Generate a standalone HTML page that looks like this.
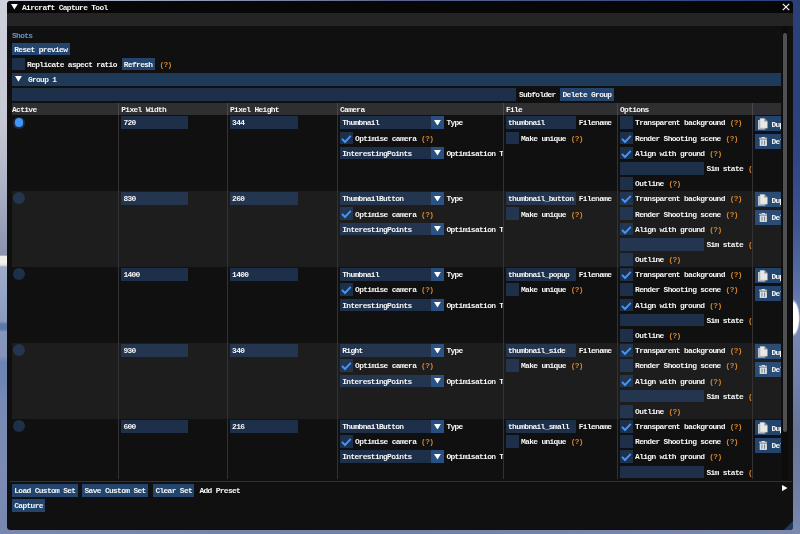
<!DOCTYPE html>
<html><head><meta charset="utf-8"><title>Aircraft Capture Tool</title><style>
html,body{margin:0;padding:0;background:#101010;}
body{width:800px;height:534px;position:relative;overflow:hidden;font-family:"Liberation Mono",monospace;font-size:7.9px;letter-spacing:-0.660px;color:#f6f6f6;}
#w{position:absolute;left:0;top:0;width:800px;height:534px;will-change:transform;}
.r{position:absolute;}
.clip{position:absolute;overflow:hidden;}
.t{position:absolute;white-space:pre;display:block;padding-top:0.5px;box-sizing:border-box;font-weight:bold;}
</style></head><body>
<div id="w">
<div class="r" style="left:0;top:0;width:800px;height:534px;background:linear-gradient(90deg,#cdd0da 0px,#c5c9d6 20px,#5a6590 400px,#2c4180 780px)"></div>
<div class="r" style="left:0;top:0;width:10px;height:534px;background:linear-gradient(180deg,#cfd2dc 0px,#c6c9d4 120px,#b0b5c8 180px,#969db6 232px,#8b92ac 255px,#efede9 256.5px,#f3f1ee 262px,#e4e3e4 265px,#9dabc9 267px,#97a6c6 290px,#8a9bc0 321px,#5d76aa 324.5px,#5d76aa 329px,#8797bd 332px,#8494bb 356px,#6e85b4 362px,#6f86b4 384px,#788ab4 400px,#7b8bb3 470px,#7786ae 534px)"></div>
<div class="r" style="left:790px;top:0;width:10px;height:534px;background:linear-gradient(180deg,#2b4079 0px,#2c427c 134px,#34498a 180px,#415690 230px,#526aa2 270px,#6177ad 296px,#7d8cb8 318px,#7586b2 340px,#7080a8 380px,#66749c 430px,#6e7ca4 480px,#7a88b0 534px)"></div>
<div class="r" style="left:785.8px;top:298.5px;width:14.4px;height:38px;border-radius:50%;background:radial-gradient(closest-side,#fff 0%,#fff 78%,rgba(205,212,230,0.6) 90%,rgba(150,162,200,0) 100%)"></div>
<div class="r" style="left:0;top:526px;width:800px;height:8px;background:linear-gradient(90deg,#7787b0,#7080a8 50%,#7a88b0)"></div>
<div class="r" style="left:7.40px;top:1.00px;width:785.70px;height:528.60px;background:#101010;border-radius:3.5px;"></div>
<div class="r" style="left:7.40px;top:1.00px;width:785.70px;height:12.00px;background:#070707;border-radius:3.5px 3.5px 0 0;"></div>
<div class="r" style="left:7.40px;top:12.60px;width:785.70px;height:13.50px;background:#242424;"></div>
<svg class="r" style="left:11.20px;top:4.10px" width="6.8" height="5.5" viewBox="0 0 6.8 5.5"><path d="M0 0 L6.8 0 L3.4 5.5 Z" fill="#fff"/></svg>
<span class="t" style="left:22.00px;top:1.55px;height:12.20px;line-height:12.20px;">Aircraft Capture Tool</span>
<svg class="r" style="left:782px;top:3.4px" width="8" height="8" viewBox="0 0 8 8"><path d="M0.8 0.8 L7.2 7.2 M7.2 0.8 L0.8 7.2" stroke="#fff" stroke-width="1.1" fill="none"/></svg>
<div class="r" style="left:781.80px;top:26.20px;width:6.20px;height:454.00px;background:#0c0c0c;"></div>
<div class="r" style="left:782.50px;top:32.60px;width:4.80px;height:399.30px;background:#505050;border-radius:2.4px;"></div>
<svg class="r" style="left:784.1px;top:520.6px" width="9" height="9" viewBox="0 0 9 9"><path d="M9 0 L9 5.6 Q9 9 5.6 9 L0 9 Z" fill="#213a5c"/></svg>
<span class="t" style="left:12.00px;top:29.55px;height:12.70px;line-height:12.70px;color:#5f97c9;">Shots</span>
<div class="r" style="left:12.10px;top:42.70px;width:57.44px;height:12.70px;background:rgba(66,150,250,0.40);"></div>
<span class="t" style="left:14.30px;top:43.25px;height:12.70px;line-height:12.70px;">Reset preview</span>
<div class="r" style="left:12.10px;top:57.80px;width:12.70px;height:12.70px;background:rgba(41,74,122,0.54);"></div>
<span class="t" style="left:27.10px;top:58.35px;height:12.70px;line-height:12.70px;">Replicate aspect ratio</span>
<div class="r" style="left:121.66px;top:57.80px;width:32.96px;height:12.70px;background:rgba(66,150,250,0.40);"></div>
<span class="t" style="left:123.86px;top:58.35px;height:12.70px;line-height:12.70px;">Refresh</span>
<span class="t" style="left:159.42px;top:58.35px;height:12.70px;line-height:12.70px;color:#d8852a;">(?)</span>
<div class="r" style="left:12.00px;top:72.80px;width:769.00px;height:12.90px;background:#1f3958;"></div>
<svg class="r" style="left:15.20px;top:76.20px" width="6.9" height="5.8" viewBox="0 0 6.9 5.8"><path d="M0 0 L6.9 0 L3.45 5.8 Z" fill="#fff"/></svg>
<span class="t" style="left:27.90px;top:73.35px;height:12.90px;line-height:12.90px;">Group 1</span>
<div class="r" style="left:12.00px;top:87.90px;width:504.20px;height:12.70px;background:rgba(41,74,122,0.54);"></div>
<span class="t" style="left:519.00px;top:88.45px;height:12.70px;line-height:12.70px;">Subfolder</span>
<div class="r" style="left:560.30px;top:87.90px;width:53.36px;height:12.70px;background:rgba(66,150,250,0.40);"></div>
<span class="t" style="left:562.50px;top:88.45px;height:12.70px;line-height:12.70px;">Delete Group</span>
<div class="r" style="left:12.00px;top:191.03px;width:769.00px;height:75.93px;background:#1d1d1d;"></div>
<div class="r" style="left:12.00px;top:342.89px;width:769.00px;height:75.93px;background:#1d1d1d;"></div>
<div class="r" style="left:12.00px;top:103.20px;width:769.00px;height:11.90px;background:#2f2f31;"></div>
<div class="r" style="left:118.10px;top:103.20px;width:1.00px;height:11.90px;background:#47474d;"></div>
<div class="r" style="left:118.15px;top:115.10px;width:0.90px;height:363.90px;background:#323236;"></div>
<div class="r" style="left:226.80px;top:103.20px;width:1.00px;height:11.90px;background:#47474d;"></div>
<div class="r" style="left:226.85px;top:115.10px;width:0.90px;height:363.90px;background:#323236;"></div>
<div class="r" style="left:337.00px;top:103.20px;width:1.00px;height:11.90px;background:#47474d;"></div>
<div class="r" style="left:337.05px;top:115.10px;width:0.90px;height:363.90px;background:#323236;"></div>
<div class="r" style="left:502.60px;top:103.20px;width:1.00px;height:11.90px;background:#47474d;"></div>
<div class="r" style="left:502.65px;top:115.10px;width:0.90px;height:363.90px;background:#323236;"></div>
<div class="r" style="left:617.10px;top:103.20px;width:1.00px;height:11.90px;background:#47474d;"></div>
<div class="r" style="left:617.15px;top:115.10px;width:0.90px;height:363.90px;background:#323236;"></div>
<div class="r" style="left:752.30px;top:103.20px;width:1.00px;height:11.90px;background:#47474d;"></div>
<div class="r" style="left:752.35px;top:115.10px;width:0.90px;height:363.90px;background:#323236;"></div>
<span class="t" style="left:12.00px;top:103.60px;height:11.90px;line-height:11.90px;">Active</span>
<span class="t" style="left:121.30px;top:103.60px;height:11.90px;line-height:11.90px;">Pixel Width</span>
<span class="t" style="left:230.00px;top:103.60px;height:11.90px;line-height:11.90px;">Pixel Height</span>
<span class="t" style="left:340.00px;top:103.60px;height:11.90px;line-height:11.90px;">Camera</span>
<span class="t" style="left:505.90px;top:103.60px;height:11.90px;line-height:11.90px;">File</span>
<span class="t" style="left:620.00px;top:103.60px;height:11.90px;line-height:11.90px;">Options</span>
<div class="clip" style="left:12.0px;top:115.1px;width:769.0px;height:364.50px"><div class="r" style="left:-12.0px;top:-115.1px">
<div class="r" style="left:12.9px;top:116.55px;width:12.0px;height:12.0px;border-radius:50%;background:rgba(41,74,122,0.54)"></div>
<div class="r" style="left:14.5px;top:118.15px;width:8.8px;height:8.8px;border-radius:50%;background:#4296fa"></div>
<div class="r" style="left:121.30px;top:116.35px;width:66.90px;height:12.70px;background:rgba(41,74,122,0.54);"></div>
<span class="t" style="left:123.40px;top:116.90px;height:12.70px;line-height:12.70px;">720</span>
<div class="r" style="left:230.00px;top:116.35px;width:68.00px;height:12.70px;background:rgba(41,74,122,0.54);"></div>
<span class="t" style="left:232.10px;top:116.90px;height:12.70px;line-height:12.70px;">344</span>
<div class="clip" style="left:338.00px;top:115.10px;width:164.70px;height:75.93px"><div class="r" style="left:-338.00px;top:-115.10px">
<div class="r" style="left:340.00px;top:116.35px;width:104.00px;height:12.70px;background:rgba(41,74,122,0.54);"></div>
<div class="r" style="left:431.30px;top:116.35px;width:12.70px;height:12.70px;background:rgba(60,135,225,0.36);"></div>
<svg class="r" style="left:434.20px;top:119.85px" width="6.9" height="5.6" viewBox="0 0 6.9 5.6"><path d="M0 0 L6.9 0 L3.45 5.6 Z" fill="#fff"/></svg>
<span class="t" style="left:342.30px;top:116.90px;height:12.70px;line-height:12.70px;">Thumbnail</span>
<span class="t" style="left:446.40px;top:116.90px;height:12.70px;line-height:12.70px;">Type</span>
<div class="r" style="left:340.00px;top:131.53px;width:12.70px;height:12.70px;background:rgba(41,74,122,0.54);"></div>
<svg class="r" style="left:340.00px;top:131.53px" width="12.7" height="12.7" viewBox="0 0 12.7 12.7"><path d="M2.0 6.8 L5.0 10.0 L10.8 3.8" fill="none" stroke="#4296fa" stroke-width="1.9"/></svg>
<span class="t" style="left:355.10px;top:132.08px;height:12.70px;line-height:12.70px;">Optimise camera</span>
<span class="t" style="left:421.10px;top:132.08px;height:12.70px;line-height:12.70px;color:#d8852a;">(?)</span>
<div class="r" style="left:340.00px;top:146.71px;width:104.00px;height:12.70px;background:rgba(41,74,122,0.54);"></div>
<div class="r" style="left:431.30px;top:146.71px;width:12.70px;height:12.70px;background:rgba(60,135,225,0.36);"></div>
<svg class="r" style="left:434.20px;top:150.21px" width="6.9" height="5.6" viewBox="0 0 6.9 5.6"><path d="M0 0 L6.9 0 L3.45 5.6 Z" fill="#fff"/></svg>
<span class="t" style="left:342.30px;top:147.26px;height:12.70px;line-height:12.70px;">InterestingPoints</span>
<span class="t" style="left:446.40px;top:147.26px;height:12.70px;line-height:12.70px;">Optimisation T</span>
</div></div>
<div class="r" style="left:505.90px;top:116.35px;width:70.50px;height:12.70px;background:rgba(41,74,122,0.54);"></div>
<span class="t" style="left:508.00px;top:116.90px;height:12.70px;line-height:12.70px;">thumbnail</span>
<span class="t" style="left:578.80px;top:116.90px;height:12.70px;line-height:12.70px;">Filename</span>
<div class="r" style="left:505.90px;top:131.53px;width:12.70px;height:12.70px;background:rgba(41,74,122,0.54);"></div>
<span class="t" style="left:521.00px;top:132.08px;height:12.70px;line-height:12.70px;">Make unique</span>
<span class="t" style="left:570.68px;top:132.08px;height:12.70px;line-height:12.70px;color:#d8852a;">(?)</span>
<div class="r" style="left:620.00px;top:116.35px;width:12.70px;height:12.70px;background:rgba(41,74,122,0.54);"></div>
<span class="t" style="left:635.10px;top:116.90px;height:12.70px;line-height:12.70px;">Transparent background</span>
<span class="t" style="left:729.66px;top:116.90px;height:12.70px;line-height:12.70px;color:#d8852a;">(?)</span>
<div class="r" style="left:620.00px;top:131.53px;width:12.70px;height:12.70px;background:rgba(41,74,122,0.54);"></div>
<svg class="r" style="left:620.00px;top:131.53px" width="12.7" height="12.7" viewBox="0 0 12.7 12.7"><path d="M2.0 6.8 L5.0 10.0 L10.8 3.8" fill="none" stroke="#4296fa" stroke-width="1.9"/></svg>
<span class="t" style="left:635.10px;top:132.08px;height:12.70px;line-height:12.70px;">Render Shooting scene</span>
<span class="t" style="left:725.58px;top:132.08px;height:12.70px;line-height:12.70px;color:#d8852a;">(?)</span>
<div class="r" style="left:620.00px;top:146.71px;width:12.70px;height:12.70px;background:rgba(41,74,122,0.54);"></div>
<svg class="r" style="left:620.00px;top:146.71px" width="12.7" height="12.7" viewBox="0 0 12.7 12.7"><path d="M2.0 6.8 L5.0 10.0 L10.8 3.8" fill="none" stroke="#4296fa" stroke-width="1.9"/></svg>
<span class="t" style="left:635.10px;top:147.26px;height:12.70px;line-height:12.70px;">Align with ground</span>
<span class="t" style="left:709.26px;top:147.26px;height:12.70px;line-height:12.70px;color:#d8852a;">(?)</span>
<div class="r" style="left:620.00px;top:161.89px;width:84.00px;height:12.70px;background:rgba(41,74,122,0.54);"></div>
<span class="t" style="left:706.40px;top:162.44px;height:12.70px;line-height:12.70px;">Sim state</span>
<span class="t" style="left:747.92px;top:162.44px;height:12.70px;line-height:12.70px;color:#d8852a;">(</span>
<div class="r" style="left:620.00px;top:177.07px;width:12.70px;height:12.70px;background:rgba(41,74,122,0.54);"></div>
<span class="t" style="left:635.10px;top:177.62px;height:12.70px;line-height:12.70px;">Outline</span>
<span class="t" style="left:668.46px;top:177.62px;height:12.70px;line-height:12.70px;color:#d8852a;">(?)</span>
<div class="r" style="left:755.00px;top:116.35px;width:26.20px;height:15.00px;background:rgba(66,150,250,0.40);"></div>
<div class="r" style="left:755.00px;top:133.85px;width:26.20px;height:15.00px;background:rgba(66,150,250,0.40);"></div>
<svg class="r" style="left:758.30px;top:118.05px" width="10" height="12" viewBox="0 0 10 12"><path d="M0 2.0 L0 11.6 L7.4 11.6 L7.4 2.0 Z" fill="#c4c6c8"/><path d="M1.9 0.2 L6.4 0.2 L9.6 3.4 L9.6 10.3 L1.9 10.3 Z" fill="#e8e8e5" stroke="#6d7f99" stroke-width="0.35"/><path d="M6.4 0.2 L6.4 3.4 L9.6 3.4 Z" fill="#7f8ea3"/></svg>
<span class="t" style="left:771.40px;top:116.80px;height:15.00px;line-height:15.00px;">Dup</span>
<svg class="r" style="left:758.80px;top:136.95px" width="8.6" height="9" viewBox="0 0 8.6 9"><path d="M0 0.8 L2.7 0.8 L2.7 0 L5.9 0 L5.9 0.8 L8.6 0.8 L8.6 1.8 L0 1.8 Z" fill="#e4e4e1"/><path d="M0.7 2.4 L7.9 2.4 L7.9 8.9 L0.7 8.9 Z" fill="#e4e4e1"/><path d="M3.0 3.6 L3.0 7.8 M5.6 3.6 L5.6 7.8" stroke="#5a7090" stroke-width="0.9"/></svg>
<span class="t" style="left:771.40px;top:133.75px;height:15.00px;line-height:15.00px;">Del</span>
<div class="r" style="left:12.9px;top:192.48px;width:12.0px;height:12.0px;border-radius:50%;background:rgba(41,74,122,0.54)"></div>
<div class="r" style="left:121.30px;top:192.28px;width:66.90px;height:12.70px;background:rgba(41,74,122,0.54);"></div>
<span class="t" style="left:123.40px;top:192.83px;height:12.70px;line-height:12.70px;">830</span>
<div class="r" style="left:230.00px;top:192.28px;width:68.00px;height:12.70px;background:rgba(41,74,122,0.54);"></div>
<span class="t" style="left:232.10px;top:192.83px;height:12.70px;line-height:12.70px;">260</span>
<div class="clip" style="left:338.00px;top:191.03px;width:164.70px;height:75.93px"><div class="r" style="left:-338.00px;top:-191.03px">
<div class="r" style="left:340.00px;top:192.28px;width:104.00px;height:12.70px;background:rgba(41,74,122,0.54);"></div>
<div class="r" style="left:431.30px;top:192.28px;width:12.70px;height:12.70px;background:rgba(60,135,225,0.36);"></div>
<svg class="r" style="left:434.20px;top:195.78px" width="6.9" height="5.6" viewBox="0 0 6.9 5.6"><path d="M0 0 L6.9 0 L3.45 5.6 Z" fill="#fff"/></svg>
<span class="t" style="left:342.30px;top:192.83px;height:12.70px;line-height:12.70px;">ThumbnailButton</span>
<span class="t" style="left:446.40px;top:192.83px;height:12.70px;line-height:12.70px;">Type</span>
<div class="r" style="left:340.00px;top:207.46px;width:12.70px;height:12.70px;background:rgba(41,74,122,0.54);"></div>
<svg class="r" style="left:340.00px;top:207.46px" width="12.7" height="12.7" viewBox="0 0 12.7 12.7"><path d="M2.0 6.8 L5.0 10.0 L10.8 3.8" fill="none" stroke="#4296fa" stroke-width="1.9"/></svg>
<span class="t" style="left:355.10px;top:208.01px;height:12.70px;line-height:12.70px;">Optimise camera</span>
<span class="t" style="left:421.10px;top:208.01px;height:12.70px;line-height:12.70px;color:#d8852a;">(?)</span>
<div class="r" style="left:340.00px;top:222.64px;width:104.00px;height:12.70px;background:rgba(41,74,122,0.54);"></div>
<div class="r" style="left:431.30px;top:222.64px;width:12.70px;height:12.70px;background:rgba(60,135,225,0.36);"></div>
<svg class="r" style="left:434.20px;top:226.14px" width="6.9" height="5.6" viewBox="0 0 6.9 5.6"><path d="M0 0 L6.9 0 L3.45 5.6 Z" fill="#fff"/></svg>
<span class="t" style="left:342.30px;top:223.19px;height:12.70px;line-height:12.70px;">InterestingPoints</span>
<span class="t" style="left:446.40px;top:223.19px;height:12.70px;line-height:12.70px;">Optimisation T</span>
</div></div>
<div class="r" style="left:505.90px;top:192.28px;width:70.50px;height:12.70px;background:rgba(41,74,122,0.54);"></div>
<span class="t" style="left:508.00px;top:192.83px;height:12.70px;line-height:12.70px;">thumbnail_button</span>
<span class="t" style="left:578.80px;top:192.83px;height:12.70px;line-height:12.70px;">Filename</span>
<div class="r" style="left:505.90px;top:207.46px;width:12.70px;height:12.70px;background:rgba(41,74,122,0.54);"></div>
<span class="t" style="left:521.00px;top:208.01px;height:12.70px;line-height:12.70px;">Make unique</span>
<span class="t" style="left:570.68px;top:208.01px;height:12.70px;line-height:12.70px;color:#d8852a;">(?)</span>
<div class="r" style="left:620.00px;top:192.28px;width:12.70px;height:12.70px;background:rgba(41,74,122,0.54);"></div>
<svg class="r" style="left:620.00px;top:192.28px" width="12.7" height="12.7" viewBox="0 0 12.7 12.7"><path d="M2.0 6.8 L5.0 10.0 L10.8 3.8" fill="none" stroke="#4296fa" stroke-width="1.9"/></svg>
<span class="t" style="left:635.10px;top:192.83px;height:12.70px;line-height:12.70px;">Transparent background</span>
<span class="t" style="left:729.66px;top:192.83px;height:12.70px;line-height:12.70px;color:#d8852a;">(?)</span>
<div class="r" style="left:620.00px;top:207.46px;width:12.70px;height:12.70px;background:rgba(41,74,122,0.54);"></div>
<span class="t" style="left:635.10px;top:208.01px;height:12.70px;line-height:12.70px;">Render Shooting scene</span>
<span class="t" style="left:725.58px;top:208.01px;height:12.70px;line-height:12.70px;color:#d8852a;">(?)</span>
<div class="r" style="left:620.00px;top:222.64px;width:12.70px;height:12.70px;background:rgba(41,74,122,0.54);"></div>
<svg class="r" style="left:620.00px;top:222.64px" width="12.7" height="12.7" viewBox="0 0 12.7 12.7"><path d="M2.0 6.8 L5.0 10.0 L10.8 3.8" fill="none" stroke="#4296fa" stroke-width="1.9"/></svg>
<span class="t" style="left:635.10px;top:223.19px;height:12.70px;line-height:12.70px;">Align with ground</span>
<span class="t" style="left:709.26px;top:223.19px;height:12.70px;line-height:12.70px;color:#d8852a;">(?)</span>
<div class="r" style="left:620.00px;top:237.82px;width:84.00px;height:12.70px;background:rgba(41,74,122,0.54);"></div>
<span class="t" style="left:706.40px;top:238.37px;height:12.70px;line-height:12.70px;">Sim state</span>
<span class="t" style="left:747.92px;top:238.37px;height:12.70px;line-height:12.70px;color:#d8852a;">(</span>
<div class="r" style="left:620.00px;top:253.00px;width:12.70px;height:12.70px;background:rgba(41,74,122,0.54);"></div>
<span class="t" style="left:635.10px;top:253.55px;height:12.70px;line-height:12.70px;">Outline</span>
<span class="t" style="left:668.46px;top:253.55px;height:12.70px;line-height:12.70px;color:#d8852a;">(?)</span>
<div class="r" style="left:755.00px;top:192.28px;width:26.20px;height:15.00px;background:rgba(66,150,250,0.40);"></div>
<div class="r" style="left:755.00px;top:209.78px;width:26.20px;height:15.00px;background:rgba(66,150,250,0.40);"></div>
<svg class="r" style="left:758.30px;top:193.98px" width="10" height="12" viewBox="0 0 10 12"><path d="M0 2.0 L0 11.6 L7.4 11.6 L7.4 2.0 Z" fill="#c4c6c8"/><path d="M1.9 0.2 L6.4 0.2 L9.6 3.4 L9.6 10.3 L1.9 10.3 Z" fill="#e8e8e5" stroke="#6d7f99" stroke-width="0.35"/><path d="M6.4 0.2 L6.4 3.4 L9.6 3.4 Z" fill="#7f8ea3"/></svg>
<span class="t" style="left:771.40px;top:192.73px;height:15.00px;line-height:15.00px;">Dup</span>
<svg class="r" style="left:758.80px;top:212.88px" width="8.6" height="9" viewBox="0 0 8.6 9"><path d="M0 0.8 L2.7 0.8 L2.7 0 L5.9 0 L5.9 0.8 L8.6 0.8 L8.6 1.8 L0 1.8 Z" fill="#e4e4e1"/><path d="M0.7 2.4 L7.9 2.4 L7.9 8.9 L0.7 8.9 Z" fill="#e4e4e1"/><path d="M3.0 3.6 L3.0 7.8 M5.6 3.6 L5.6 7.8" stroke="#5a7090" stroke-width="0.9"/></svg>
<span class="t" style="left:771.40px;top:209.68px;height:15.00px;line-height:15.00px;">Del</span>
<div class="r" style="left:12.9px;top:268.41px;width:12.0px;height:12.0px;border-radius:50%;background:rgba(41,74,122,0.54)"></div>
<div class="r" style="left:121.30px;top:268.21px;width:66.90px;height:12.70px;background:rgba(41,74,122,0.54);"></div>
<span class="t" style="left:123.40px;top:268.76px;height:12.70px;line-height:12.70px;">1400</span>
<div class="r" style="left:230.00px;top:268.21px;width:68.00px;height:12.70px;background:rgba(41,74,122,0.54);"></div>
<span class="t" style="left:232.10px;top:268.76px;height:12.70px;line-height:12.70px;">1400</span>
<div class="clip" style="left:338.00px;top:266.96px;width:164.70px;height:75.93px"><div class="r" style="left:-338.00px;top:-266.96px">
<div class="r" style="left:340.00px;top:268.21px;width:104.00px;height:12.70px;background:rgba(41,74,122,0.54);"></div>
<div class="r" style="left:431.30px;top:268.21px;width:12.70px;height:12.70px;background:rgba(60,135,225,0.36);"></div>
<svg class="r" style="left:434.20px;top:271.71px" width="6.9" height="5.6" viewBox="0 0 6.9 5.6"><path d="M0 0 L6.9 0 L3.45 5.6 Z" fill="#fff"/></svg>
<span class="t" style="left:342.30px;top:268.76px;height:12.70px;line-height:12.70px;">Thumbnail</span>
<span class="t" style="left:446.40px;top:268.76px;height:12.70px;line-height:12.70px;">Type</span>
<div class="r" style="left:340.00px;top:283.39px;width:12.70px;height:12.70px;background:rgba(41,74,122,0.54);"></div>
<svg class="r" style="left:340.00px;top:283.39px" width="12.7" height="12.7" viewBox="0 0 12.7 12.7"><path d="M2.0 6.8 L5.0 10.0 L10.8 3.8" fill="none" stroke="#4296fa" stroke-width="1.9"/></svg>
<span class="t" style="left:355.10px;top:283.94px;height:12.70px;line-height:12.70px;">Optimise camera</span>
<span class="t" style="left:421.10px;top:283.94px;height:12.70px;line-height:12.70px;color:#d8852a;">(?)</span>
<div class="r" style="left:340.00px;top:298.57px;width:104.00px;height:12.70px;background:rgba(41,74,122,0.54);"></div>
<div class="r" style="left:431.30px;top:298.57px;width:12.70px;height:12.70px;background:rgba(60,135,225,0.36);"></div>
<svg class="r" style="left:434.20px;top:302.07px" width="6.9" height="5.6" viewBox="0 0 6.9 5.6"><path d="M0 0 L6.9 0 L3.45 5.6 Z" fill="#fff"/></svg>
<span class="t" style="left:342.30px;top:299.12px;height:12.70px;line-height:12.70px;">InterestingPoints</span>
<span class="t" style="left:446.40px;top:299.12px;height:12.70px;line-height:12.70px;">Optimisation T</span>
</div></div>
<div class="r" style="left:505.90px;top:268.21px;width:70.50px;height:12.70px;background:rgba(41,74,122,0.54);"></div>
<span class="t" style="left:508.00px;top:268.76px;height:12.70px;line-height:12.70px;">thumbnail_popup</span>
<span class="t" style="left:578.80px;top:268.76px;height:12.70px;line-height:12.70px;">Filename</span>
<div class="r" style="left:505.90px;top:283.39px;width:12.70px;height:12.70px;background:rgba(41,74,122,0.54);"></div>
<span class="t" style="left:521.00px;top:283.94px;height:12.70px;line-height:12.70px;">Make unique</span>
<span class="t" style="left:570.68px;top:283.94px;height:12.70px;line-height:12.70px;color:#d8852a;">(?)</span>
<div class="r" style="left:620.00px;top:268.21px;width:12.70px;height:12.70px;background:rgba(41,74,122,0.54);"></div>
<svg class="r" style="left:620.00px;top:268.21px" width="12.7" height="12.7" viewBox="0 0 12.7 12.7"><path d="M2.0 6.8 L5.0 10.0 L10.8 3.8" fill="none" stroke="#4296fa" stroke-width="1.9"/></svg>
<span class="t" style="left:635.10px;top:268.76px;height:12.70px;line-height:12.70px;">Transparent background</span>
<span class="t" style="left:729.66px;top:268.76px;height:12.70px;line-height:12.70px;color:#d8852a;">(?)</span>
<div class="r" style="left:620.00px;top:283.39px;width:12.70px;height:12.70px;background:rgba(41,74,122,0.54);"></div>
<span class="t" style="left:635.10px;top:283.94px;height:12.70px;line-height:12.70px;">Render Shooting scene</span>
<span class="t" style="left:725.58px;top:283.94px;height:12.70px;line-height:12.70px;color:#d8852a;">(?)</span>
<div class="r" style="left:620.00px;top:298.57px;width:12.70px;height:12.70px;background:rgba(41,74,122,0.54);"></div>
<svg class="r" style="left:620.00px;top:298.57px" width="12.7" height="12.7" viewBox="0 0 12.7 12.7"><path d="M2.0 6.8 L5.0 10.0 L10.8 3.8" fill="none" stroke="#4296fa" stroke-width="1.9"/></svg>
<span class="t" style="left:635.10px;top:299.12px;height:12.70px;line-height:12.70px;">Align with ground</span>
<span class="t" style="left:709.26px;top:299.12px;height:12.70px;line-height:12.70px;color:#d8852a;">(?)</span>
<div class="r" style="left:620.00px;top:313.75px;width:84.00px;height:12.70px;background:rgba(41,74,122,0.54);"></div>
<span class="t" style="left:706.40px;top:314.30px;height:12.70px;line-height:12.70px;">Sim state</span>
<span class="t" style="left:747.92px;top:314.30px;height:12.70px;line-height:12.70px;color:#d8852a;">(</span>
<div class="r" style="left:620.00px;top:328.93px;width:12.70px;height:12.70px;background:rgba(41,74,122,0.54);"></div>
<span class="t" style="left:635.10px;top:329.48px;height:12.70px;line-height:12.70px;">Outline</span>
<span class="t" style="left:668.46px;top:329.48px;height:12.70px;line-height:12.70px;color:#d8852a;">(?)</span>
<div class="r" style="left:755.00px;top:268.21px;width:26.20px;height:15.00px;background:rgba(66,150,250,0.40);"></div>
<div class="r" style="left:755.00px;top:285.71px;width:26.20px;height:15.00px;background:rgba(66,150,250,0.40);"></div>
<svg class="r" style="left:758.30px;top:269.91px" width="10" height="12" viewBox="0 0 10 12"><path d="M0 2.0 L0 11.6 L7.4 11.6 L7.4 2.0 Z" fill="#c4c6c8"/><path d="M1.9 0.2 L6.4 0.2 L9.6 3.4 L9.6 10.3 L1.9 10.3 Z" fill="#e8e8e5" stroke="#6d7f99" stroke-width="0.35"/><path d="M6.4 0.2 L6.4 3.4 L9.6 3.4 Z" fill="#7f8ea3"/></svg>
<span class="t" style="left:771.40px;top:268.66px;height:15.00px;line-height:15.00px;">Dup</span>
<svg class="r" style="left:758.80px;top:288.81px" width="8.6" height="9" viewBox="0 0 8.6 9"><path d="M0 0.8 L2.7 0.8 L2.7 0 L5.9 0 L5.9 0.8 L8.6 0.8 L8.6 1.8 L0 1.8 Z" fill="#e4e4e1"/><path d="M0.7 2.4 L7.9 2.4 L7.9 8.9 L0.7 8.9 Z" fill="#e4e4e1"/><path d="M3.0 3.6 L3.0 7.8 M5.6 3.6 L5.6 7.8" stroke="#5a7090" stroke-width="0.9"/></svg>
<span class="t" style="left:771.40px;top:285.61px;height:15.00px;line-height:15.00px;">Del</span>
<div class="r" style="left:12.9px;top:344.34px;width:12.0px;height:12.0px;border-radius:50%;background:rgba(41,74,122,0.54)"></div>
<div class="r" style="left:121.30px;top:344.14px;width:66.90px;height:12.70px;background:rgba(41,74,122,0.54);"></div>
<span class="t" style="left:123.40px;top:344.69px;height:12.70px;line-height:12.70px;">930</span>
<div class="r" style="left:230.00px;top:344.14px;width:68.00px;height:12.70px;background:rgba(41,74,122,0.54);"></div>
<span class="t" style="left:232.10px;top:344.69px;height:12.70px;line-height:12.70px;">340</span>
<div class="clip" style="left:338.00px;top:342.89px;width:164.70px;height:75.93px"><div class="r" style="left:-338.00px;top:-342.89px">
<div class="r" style="left:340.00px;top:344.14px;width:104.00px;height:12.70px;background:rgba(41,74,122,0.54);"></div>
<div class="r" style="left:431.30px;top:344.14px;width:12.70px;height:12.70px;background:rgba(60,135,225,0.36);"></div>
<svg class="r" style="left:434.20px;top:347.64px" width="6.9" height="5.6" viewBox="0 0 6.9 5.6"><path d="M0 0 L6.9 0 L3.45 5.6 Z" fill="#fff"/></svg>
<span class="t" style="left:342.30px;top:344.69px;height:12.70px;line-height:12.70px;">Right</span>
<span class="t" style="left:446.40px;top:344.69px;height:12.70px;line-height:12.70px;">Type</span>
<div class="r" style="left:340.00px;top:359.32px;width:12.70px;height:12.70px;background:rgba(41,74,122,0.54);"></div>
<svg class="r" style="left:340.00px;top:359.32px" width="12.7" height="12.7" viewBox="0 0 12.7 12.7"><path d="M2.0 6.8 L5.0 10.0 L10.8 3.8" fill="none" stroke="#4296fa" stroke-width="1.9"/></svg>
<span class="t" style="left:355.10px;top:359.87px;height:12.70px;line-height:12.70px;">Optimise camera</span>
<span class="t" style="left:421.10px;top:359.87px;height:12.70px;line-height:12.70px;color:#d8852a;">(?)</span>
<div class="r" style="left:340.00px;top:374.50px;width:104.00px;height:12.70px;background:rgba(41,74,122,0.54);"></div>
<div class="r" style="left:431.30px;top:374.50px;width:12.70px;height:12.70px;background:rgba(60,135,225,0.36);"></div>
<svg class="r" style="left:434.20px;top:378.00px" width="6.9" height="5.6" viewBox="0 0 6.9 5.6"><path d="M0 0 L6.9 0 L3.45 5.6 Z" fill="#fff"/></svg>
<span class="t" style="left:342.30px;top:375.05px;height:12.70px;line-height:12.70px;">InterestingPoints</span>
<span class="t" style="left:446.40px;top:375.05px;height:12.70px;line-height:12.70px;">Optimisation T</span>
</div></div>
<div class="r" style="left:505.90px;top:344.14px;width:70.50px;height:12.70px;background:rgba(41,74,122,0.54);"></div>
<span class="t" style="left:508.00px;top:344.69px;height:12.70px;line-height:12.70px;">thumbnail_side</span>
<span class="t" style="left:578.80px;top:344.69px;height:12.70px;line-height:12.70px;">Filename</span>
<div class="r" style="left:505.90px;top:359.32px;width:12.70px;height:12.70px;background:rgba(41,74,122,0.54);"></div>
<span class="t" style="left:521.00px;top:359.87px;height:12.70px;line-height:12.70px;">Make unique</span>
<span class="t" style="left:570.68px;top:359.87px;height:12.70px;line-height:12.70px;color:#d8852a;">(?)</span>
<div class="r" style="left:620.00px;top:344.14px;width:12.70px;height:12.70px;background:rgba(41,74,122,0.54);"></div>
<svg class="r" style="left:620.00px;top:344.14px" width="12.7" height="12.7" viewBox="0 0 12.7 12.7"><path d="M2.0 6.8 L5.0 10.0 L10.8 3.8" fill="none" stroke="#4296fa" stroke-width="1.9"/></svg>
<span class="t" style="left:635.10px;top:344.69px;height:12.70px;line-height:12.70px;">Transparent background</span>
<span class="t" style="left:729.66px;top:344.69px;height:12.70px;line-height:12.70px;color:#d8852a;">(?)</span>
<div class="r" style="left:620.00px;top:359.32px;width:12.70px;height:12.70px;background:rgba(41,74,122,0.54);"></div>
<span class="t" style="left:635.10px;top:359.87px;height:12.70px;line-height:12.70px;">Render Shooting scene</span>
<span class="t" style="left:725.58px;top:359.87px;height:12.70px;line-height:12.70px;color:#d8852a;">(?)</span>
<div class="r" style="left:620.00px;top:374.50px;width:12.70px;height:12.70px;background:rgba(41,74,122,0.54);"></div>
<svg class="r" style="left:620.00px;top:374.50px" width="12.7" height="12.7" viewBox="0 0 12.7 12.7"><path d="M2.0 6.8 L5.0 10.0 L10.8 3.8" fill="none" stroke="#4296fa" stroke-width="1.9"/></svg>
<span class="t" style="left:635.10px;top:375.05px;height:12.70px;line-height:12.70px;">Align with ground</span>
<span class="t" style="left:709.26px;top:375.05px;height:12.70px;line-height:12.70px;color:#d8852a;">(?)</span>
<div class="r" style="left:620.00px;top:389.68px;width:84.00px;height:12.70px;background:rgba(41,74,122,0.54);"></div>
<span class="t" style="left:706.40px;top:390.23px;height:12.70px;line-height:12.70px;">Sim state</span>
<span class="t" style="left:747.92px;top:390.23px;height:12.70px;line-height:12.70px;color:#d8852a;">(</span>
<div class="r" style="left:620.00px;top:404.86px;width:12.70px;height:12.70px;background:rgba(41,74,122,0.54);"></div>
<span class="t" style="left:635.10px;top:405.41px;height:12.70px;line-height:12.70px;">Outline</span>
<span class="t" style="left:668.46px;top:405.41px;height:12.70px;line-height:12.70px;color:#d8852a;">(?)</span>
<div class="r" style="left:755.00px;top:344.14px;width:26.20px;height:15.00px;background:rgba(66,150,250,0.40);"></div>
<div class="r" style="left:755.00px;top:361.64px;width:26.20px;height:15.00px;background:rgba(66,150,250,0.40);"></div>
<svg class="r" style="left:758.30px;top:345.84px" width="10" height="12" viewBox="0 0 10 12"><path d="M0 2.0 L0 11.6 L7.4 11.6 L7.4 2.0 Z" fill="#c4c6c8"/><path d="M1.9 0.2 L6.4 0.2 L9.6 3.4 L9.6 10.3 L1.9 10.3 Z" fill="#e8e8e5" stroke="#6d7f99" stroke-width="0.35"/><path d="M6.4 0.2 L6.4 3.4 L9.6 3.4 Z" fill="#7f8ea3"/></svg>
<span class="t" style="left:771.40px;top:344.59px;height:15.00px;line-height:15.00px;">Dup</span>
<svg class="r" style="left:758.80px;top:364.74px" width="8.6" height="9" viewBox="0 0 8.6 9"><path d="M0 0.8 L2.7 0.8 L2.7 0 L5.9 0 L5.9 0.8 L8.6 0.8 L8.6 1.8 L0 1.8 Z" fill="#e4e4e1"/><path d="M0.7 2.4 L7.9 2.4 L7.9 8.9 L0.7 8.9 Z" fill="#e4e4e1"/><path d="M3.0 3.6 L3.0 7.8 M5.6 3.6 L5.6 7.8" stroke="#5a7090" stroke-width="0.9"/></svg>
<span class="t" style="left:771.40px;top:361.54px;height:15.00px;line-height:15.00px;">Del</span>
<div class="r" style="left:12.9px;top:420.27px;width:12.0px;height:12.0px;border-radius:50%;background:rgba(41,74,122,0.54)"></div>
<div class="r" style="left:121.30px;top:420.07px;width:66.90px;height:12.70px;background:rgba(41,74,122,0.54);"></div>
<span class="t" style="left:123.40px;top:420.62px;height:12.70px;line-height:12.70px;">600</span>
<div class="r" style="left:230.00px;top:420.07px;width:68.00px;height:12.70px;background:rgba(41,74,122,0.54);"></div>
<span class="t" style="left:232.10px;top:420.62px;height:12.70px;line-height:12.70px;">216</span>
<div class="clip" style="left:338.00px;top:418.82px;width:164.70px;height:75.93px"><div class="r" style="left:-338.00px;top:-418.82px">
<div class="r" style="left:340.00px;top:420.07px;width:104.00px;height:12.70px;background:rgba(41,74,122,0.54);"></div>
<div class="r" style="left:431.30px;top:420.07px;width:12.70px;height:12.70px;background:rgba(60,135,225,0.36);"></div>
<svg class="r" style="left:434.20px;top:423.57px" width="6.9" height="5.6" viewBox="0 0 6.9 5.6"><path d="M0 0 L6.9 0 L3.45 5.6 Z" fill="#fff"/></svg>
<span class="t" style="left:342.30px;top:420.62px;height:12.70px;line-height:12.70px;">ThumbnailButton</span>
<span class="t" style="left:446.40px;top:420.62px;height:12.70px;line-height:12.70px;">Type</span>
<div class="r" style="left:340.00px;top:435.25px;width:12.70px;height:12.70px;background:rgba(41,74,122,0.54);"></div>
<svg class="r" style="left:340.00px;top:435.25px" width="12.7" height="12.7" viewBox="0 0 12.7 12.7"><path d="M2.0 6.8 L5.0 10.0 L10.8 3.8" fill="none" stroke="#4296fa" stroke-width="1.9"/></svg>
<span class="t" style="left:355.10px;top:435.80px;height:12.70px;line-height:12.70px;">Optimise camera</span>
<span class="t" style="left:421.10px;top:435.80px;height:12.70px;line-height:12.70px;color:#d8852a;">(?)</span>
<div class="r" style="left:340.00px;top:450.43px;width:104.00px;height:12.70px;background:rgba(41,74,122,0.54);"></div>
<div class="r" style="left:431.30px;top:450.43px;width:12.70px;height:12.70px;background:rgba(60,135,225,0.36);"></div>
<svg class="r" style="left:434.20px;top:453.93px" width="6.9" height="5.6" viewBox="0 0 6.9 5.6"><path d="M0 0 L6.9 0 L3.45 5.6 Z" fill="#fff"/></svg>
<span class="t" style="left:342.30px;top:450.98px;height:12.70px;line-height:12.70px;">InterestingPoints</span>
<span class="t" style="left:446.40px;top:450.98px;height:12.70px;line-height:12.70px;">Optimisation T</span>
</div></div>
<div class="r" style="left:505.90px;top:420.07px;width:70.50px;height:12.70px;background:rgba(41,74,122,0.54);"></div>
<span class="t" style="left:508.00px;top:420.62px;height:12.70px;line-height:12.70px;">thumbnail_small</span>
<span class="t" style="left:578.80px;top:420.62px;height:12.70px;line-height:12.70px;">Filename</span>
<div class="r" style="left:505.90px;top:435.25px;width:12.70px;height:12.70px;background:rgba(41,74,122,0.54);"></div>
<span class="t" style="left:521.00px;top:435.80px;height:12.70px;line-height:12.70px;">Make unique</span>
<span class="t" style="left:570.68px;top:435.80px;height:12.70px;line-height:12.70px;color:#d8852a;">(?)</span>
<div class="r" style="left:620.00px;top:420.07px;width:12.70px;height:12.70px;background:rgba(41,74,122,0.54);"></div>
<svg class="r" style="left:620.00px;top:420.07px" width="12.7" height="12.7" viewBox="0 0 12.7 12.7"><path d="M2.0 6.8 L5.0 10.0 L10.8 3.8" fill="none" stroke="#4296fa" stroke-width="1.9"/></svg>
<span class="t" style="left:635.10px;top:420.62px;height:12.70px;line-height:12.70px;">Transparent background</span>
<span class="t" style="left:729.66px;top:420.62px;height:12.70px;line-height:12.70px;color:#d8852a;">(?)</span>
<div class="r" style="left:620.00px;top:435.25px;width:12.70px;height:12.70px;background:rgba(41,74,122,0.54);"></div>
<span class="t" style="left:635.10px;top:435.80px;height:12.70px;line-height:12.70px;">Render Shooting scene</span>
<span class="t" style="left:725.58px;top:435.80px;height:12.70px;line-height:12.70px;color:#d8852a;">(?)</span>
<div class="r" style="left:620.00px;top:450.43px;width:12.70px;height:12.70px;background:rgba(41,74,122,0.54);"></div>
<svg class="r" style="left:620.00px;top:450.43px" width="12.7" height="12.7" viewBox="0 0 12.7 12.7"><path d="M2.0 6.8 L5.0 10.0 L10.8 3.8" fill="none" stroke="#4296fa" stroke-width="1.9"/></svg>
<span class="t" style="left:635.10px;top:450.98px;height:12.70px;line-height:12.70px;">Align with ground</span>
<span class="t" style="left:709.26px;top:450.98px;height:12.70px;line-height:12.70px;color:#d8852a;">(?)</span>
<div class="r" style="left:620.00px;top:465.61px;width:84.00px;height:12.70px;background:rgba(41,74,122,0.54);"></div>
<span class="t" style="left:706.40px;top:466.16px;height:12.70px;line-height:12.70px;">Sim state</span>
<span class="t" style="left:747.92px;top:466.16px;height:12.70px;line-height:12.70px;color:#d8852a;">(</span>
<div class="r" style="left:620.00px;top:480.79px;width:12.70px;height:12.70px;background:rgba(41,74,122,0.54);"></div>
<span class="t" style="left:635.10px;top:481.34px;height:12.70px;line-height:12.70px;">Outline</span>
<span class="t" style="left:668.46px;top:481.34px;height:12.70px;line-height:12.70px;color:#d8852a;">(?)</span>
<div class="r" style="left:755.00px;top:420.07px;width:26.20px;height:15.00px;background:rgba(66,150,250,0.40);"></div>
<div class="r" style="left:755.00px;top:437.57px;width:26.20px;height:15.00px;background:rgba(66,150,250,0.40);"></div>
<svg class="r" style="left:758.30px;top:421.77px" width="10" height="12" viewBox="0 0 10 12"><path d="M0 2.0 L0 11.6 L7.4 11.6 L7.4 2.0 Z" fill="#c4c6c8"/><path d="M1.9 0.2 L6.4 0.2 L9.6 3.4 L9.6 10.3 L1.9 10.3 Z" fill="#e8e8e5" stroke="#6d7f99" stroke-width="0.35"/><path d="M6.4 0.2 L6.4 3.4 L9.6 3.4 Z" fill="#7f8ea3"/></svg>
<span class="t" style="left:771.40px;top:420.52px;height:15.00px;line-height:15.00px;">Dup</span>
<svg class="r" style="left:758.80px;top:440.67px" width="8.6" height="9" viewBox="0 0 8.6 9"><path d="M0 0.8 L2.7 0.8 L2.7 0 L5.9 0 L5.9 0.8 L8.6 0.8 L8.6 1.8 L0 1.8 Z" fill="#e4e4e1"/><path d="M0.7 2.4 L7.9 2.4 L7.9 8.9 L0.7 8.9 Z" fill="#e4e4e1"/><path d="M3.0 3.6 L3.0 7.8 M5.6 3.6 L5.6 7.8" stroke="#5a7090" stroke-width="0.9"/></svg>
<span class="t" style="left:771.40px;top:437.47px;height:15.00px;line-height:15.00px;">Del</span>
</div></div>
<div class="r" style="left:10.00px;top:480.80px;width:781.60px;height:0.90px;background:#313134;"></div>
<div class="r" style="left:12.10px;top:483.90px;width:65.60px;height:12.70px;background:rgba(66,150,250,0.40);"></div>
<span class="t" style="left:14.30px;top:484.45px;height:12.70px;line-height:12.70px;">Load Custom Set</span>
<div class="r" style="left:82.30px;top:483.90px;width:65.60px;height:12.70px;background:rgba(66,150,250,0.40);"></div>
<span class="t" style="left:84.50px;top:484.45px;height:12.70px;line-height:12.70px;">Save Custom Set</span>
<div class="r" style="left:153.20px;top:483.90px;width:41.12px;height:12.70px;background:rgba(66,150,250,0.40);"></div>
<span class="t" style="left:155.40px;top:484.45px;height:12.70px;line-height:12.70px;">Clear Set</span>
<span class="t" style="left:199.40px;top:484.45px;height:12.70px;line-height:12.70px;">Add Preset</span>
<svg class="r" style="left:782.00px;top:485.30px" width="5.6" height="6.2" viewBox="0 0 5.6 6.2"><path d="M0 0 L5.6 3.1 L0 6.2 Z" fill="#fff"/></svg>
<div class="r" style="left:12.10px;top:498.90px;width:32.96px;height:12.70px;background:rgba(66,150,250,0.40);"></div>
<span class="t" style="left:14.30px;top:499.45px;height:12.70px;line-height:12.70px;">Capture</span>
</div>
</body></html>
